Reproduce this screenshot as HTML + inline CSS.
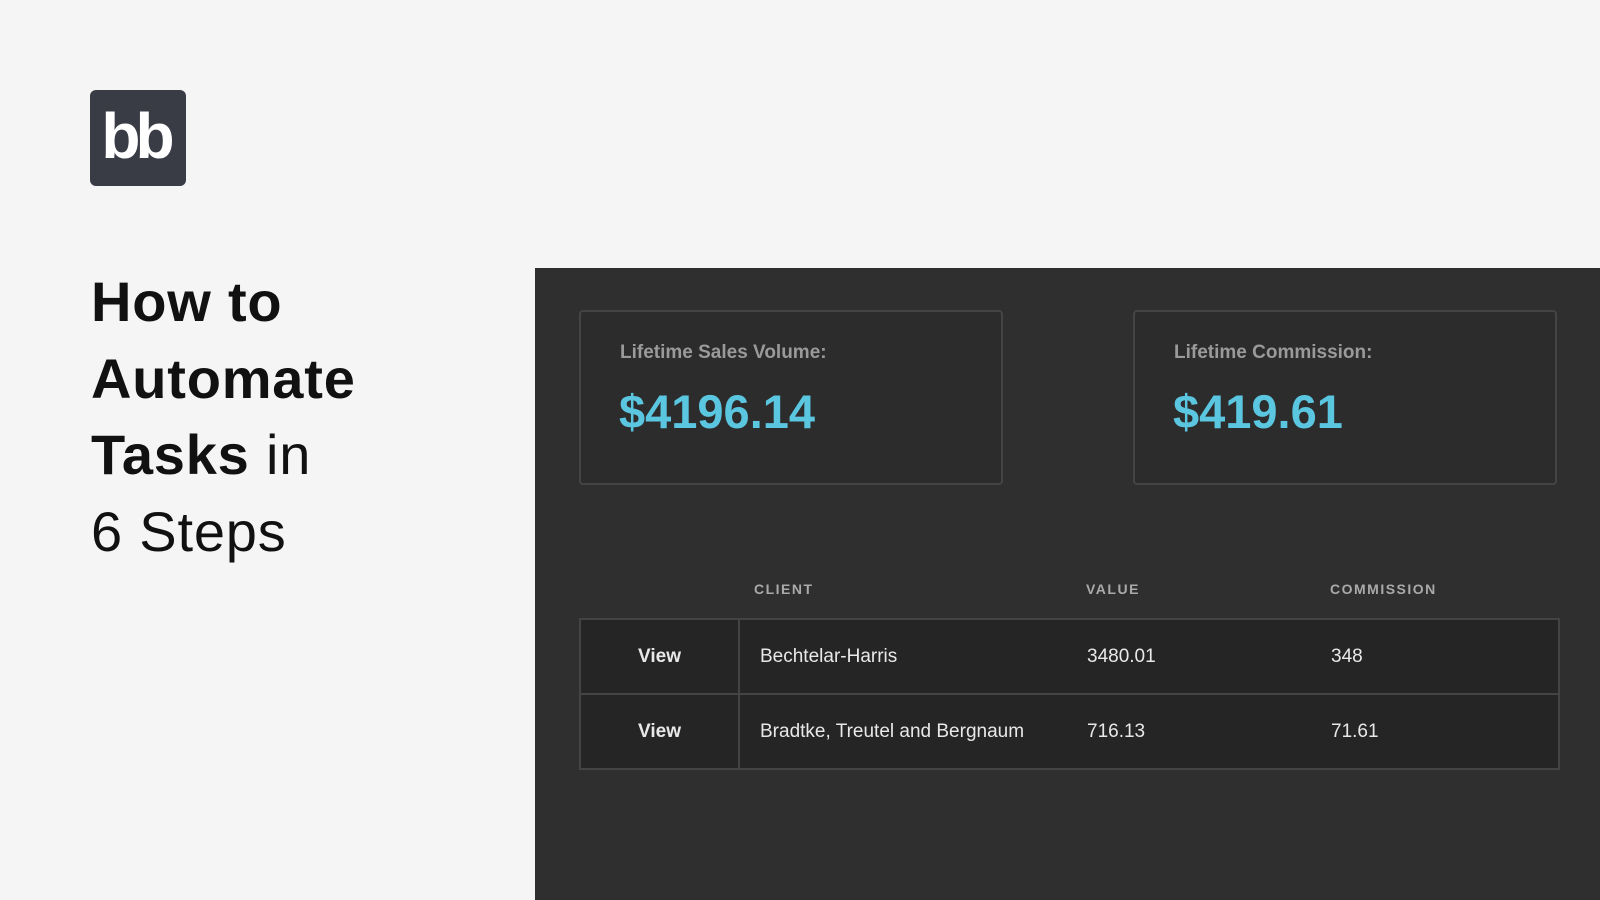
<!DOCTYPE html>
<html><head><style>
body{margin:0;width:1600px;height:900px;background:#f5f5f5;position:relative;overflow:hidden;font-family:"Liberation Sans",sans-serif}
.logo{position:absolute;left:90px;top:90px;width:96px;height:96px;background:#3a3c45;border-radius:6px;color:#fff;font-weight:bold;font-size:64px;letter-spacing:-5px;text-align:center;line-height:92px;text-indent:-5px}
.title{position:absolute;left:91px;top:264px;font-size:56px;line-height:76.5px;color:#111;letter-spacing:0.8px}
.title b{font-weight:bold}
.panel{position:absolute;left:535px;top:268px;right:0;bottom:0;background:#2f2f2f}
.card{position:absolute;top:310px;width:420px;height:171px;border:2px solid #444;border-radius:4px;background:#2c2c2c}
.card .l{position:absolute;left:39px;top:30px;font-size:19px;color:#9a9a9a;font-weight:bold}
.card .v{position:absolute;left:38px;top:72px;font-size:47px;color:#5bc6e0;font-weight:bold}
.h{position:absolute;top:581px;font-size:14px;font-weight:bold;color:#aaa;letter-spacing:1.5px}
table{position:absolute;left:579px;top:618px;width:981px;border-collapse:collapse;background:#252525;color:#e8e8e8;font-size:19px;border:2px solid #444}
td{border-top:2px solid #444;border-bottom:2px solid #444;height:73px;padding:0}
td.a{border-right:2px solid #444;text-align:center;font-weight:bold;width:157px}
</style></head><body>
<div class="logo">bb</div>
<div class="title"><b>How to<br>Automate<br>Tasks</b> in<br>6 Steps</div>
<div class="panel"></div>
<div class="card" style="left:579px"><div class="l">Lifetime Sales Volume:</div><div class="v">$4196.14</div></div>
<div class="card" style="left:1133px"><div class="l">Lifetime Commission:</div><div class="v">$419.61</div></div>
<div class="h" style="left:754px">CLIENT</div>
<div class="h" style="left:1086px">VALUE</div>
<div class="h" style="left:1330px">COMMISSION</div>
<table>
<tr><td class="a">View</td><td style="padding-left:20px;width:327px">Bechtelar-Harris</td><td style="width:244px">3480.01</td><td>348</td></tr>
<tr><td class="a">View</td><td style="padding-left:20px">Bradtke, Treutel and Bergnaum</td><td>716.13</td><td>71.61</td></tr>
</table>
</body></html>
